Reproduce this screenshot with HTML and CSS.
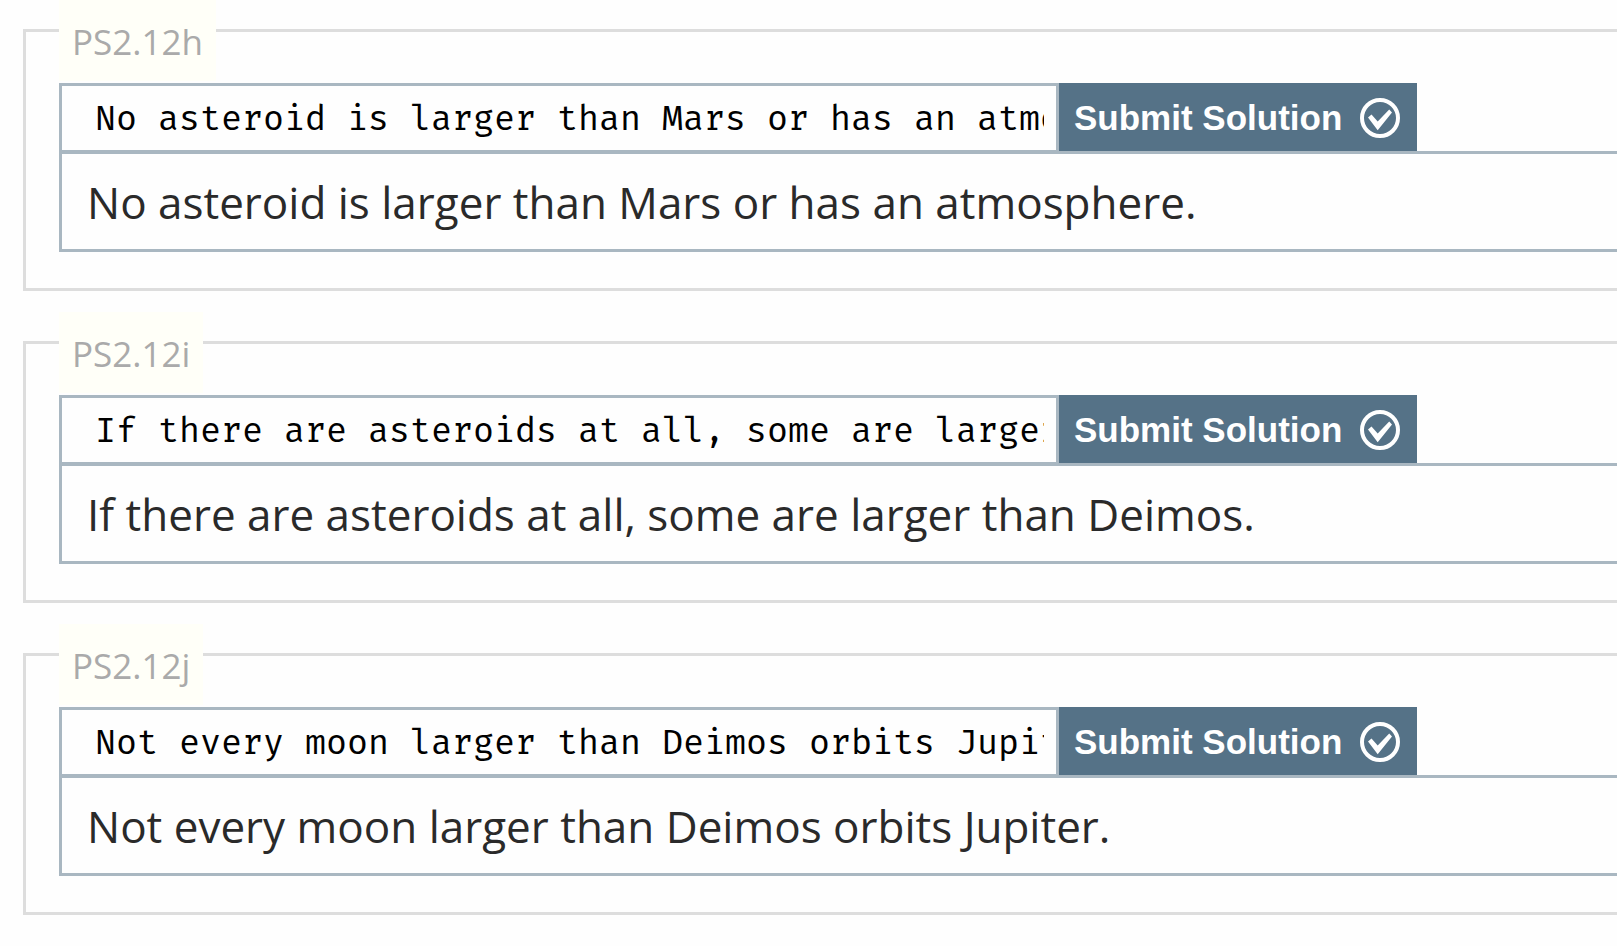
FILE: index.html
```html
<!doctype html>
<html lang="en">
  <head>
    <meta charset="UTF-8" />
    <meta name="viewport" content="width=device-width, initial-scale=1.0" />
    <title>PS2.12</title>
    <link rel="stylesheet" href="styles.css">
  </head>
  <body>
    <form class="problems">
      <fieldset class="problem">
        <legend class="problem-label">PS2.12h</legend>
        <div class="entry">
          <input class="answer" type="text" aria-label="PS2.12h" value="No asteroid is larger than Mars or has an atmosphere.">
          <button class="submit" type="button">
            Submit Solution
            <svg class="check" viewBox="0 0 40 40" aria-hidden="true">
              <circle cx="20" cy="20" r="18" />
              <path d="M8 19.5L11.5 16.5L17.7 23.5L29.2 11.5L32 14.5L17.7 32.3Z" />
            </svg>
          </button>
        </div>
        <div class="preview">No asteroid is larger than Mars or has an atmosphere.</div>
      </fieldset>

      <fieldset class="problem">
        <legend class="problem-label">PS2.12i</legend>
        <div class="entry">
          <input class="answer" type="text" aria-label="PS2.12i" value="If there are asteroids at all, some are larger than Deimos.">
          <button class="submit" type="button">
            Submit Solution
            <svg class="check" viewBox="0 0 40 40" aria-hidden="true">
              <circle cx="20" cy="20" r="18" />
              <path d="M8 19.5L11.5 16.5L17.7 23.5L29.2 11.5L32 14.5L17.7 32.3Z" />
            </svg>
          </button>
        </div>
        <div class="preview">If there are asteroids at all, some are larger than Deimos.</div>
      </fieldset>

      <fieldset class="problem">
        <legend class="problem-label">PS2.12j</legend>
        <div class="entry">
          <input class="answer" type="text" aria-label="PS2.12j" value="Not every moon larger than Deimos orbits Jupiter.">
          <button class="submit" type="button">
            Submit Solution
            <svg class="check" viewBox="0 0 40 40" aria-hidden="true">
              <circle cx="20" cy="20" r="18" />
              <path d="M8 19.5L11.5 16.5L17.7 23.5L29.2 11.5L32 14.5L17.7 32.3Z" />
            </svg>
          </button>
        </div>
        <div class="preview">Not every moon larger than Deimos orbits Jupiter.</div>
      </fieldset>
    </form>
  </body>
</html>
```
FILE: styles.css
```css
body {
  margin: 0;
  overflow-x: hidden;
  background-color: #fefefe;
  color: #2a2a2a;
  font-family: "Segoe UI", "Open Sans", "Noto Sans", sans-serif;
}
/* the problem boxes run off the right side of the window */
.problems {
  display: flex;
  flex-direction: column;
  gap: 50px;
  padding: 29px 0 32px 23px;
  margin-right: -60px;
}
.problem {
  margin: 0;
  padding: 0 33px 36px;
  border: 3px solid #ddd;
}
/* floated so that it can sit lower on the border than a normal legend */
.problem-label {
  float: left;
  margin: -32px 0 2px;
  padding: 17px 13px 15px;
  background-color: #fffff8;
  color: #aaa;
  font-size: 35px;
  line-height: 49px;
}
.entry {
  clear: both;
  display: flex;
  align-items: flex-start;
}
.answer {
  box-sizing: border-box;
  width: 1000px;
  height: 70px;
  margin: 0 0 -2px;
  padding: 0 12px 0 33px;
  border: 3px solid #a9b7c1;
  border-radius: 0;
  background-color: #fefefe;
  color: #000;
  font-family: "Fira Mono", "DejaVu Sans Mono", monospace;
  font-size: 35px;
}
.submit {
  display: flex;
  align-items: center;
  gap: 18px;
  height: 68px;
  padding: 2px 17px 0 15px;
  border: none;
  background-color: #557287;
  color: #fff;
  font-family: Arial, "Liberation Sans", sans-serif;
  font-size: 35px;
  font-weight: bold;
  white-space: nowrap;
  cursor: pointer;
}
.check {
  width: 40px;
  height: 40px;
}
.check circle {
  fill: none;
  stroke: #fff;
  stroke-width: 4;
}
.check path {
  fill: #fff;
}
.preview {
  padding: 17px 25px 15px;
  border: 3px solid #a9b7c1;
  font-size: 44px;
  line-height: 63px;
}
```
